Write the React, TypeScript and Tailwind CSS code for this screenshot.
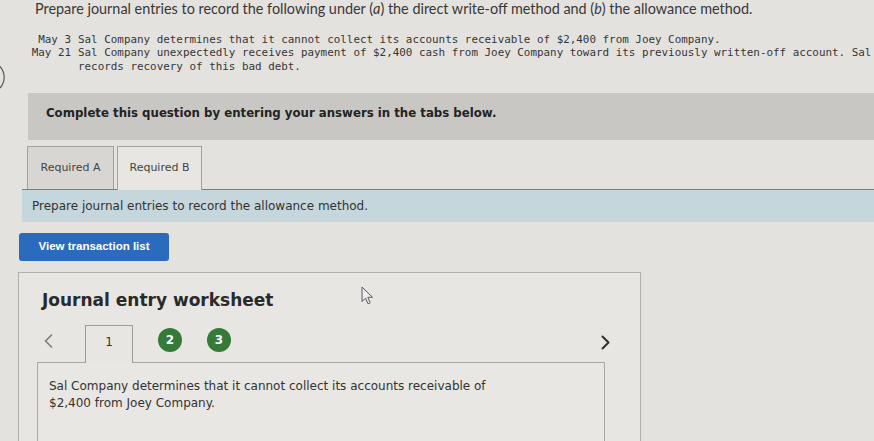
import React from "react";

const sans = "font-['DejaVu_Sans',sans-serif]";

function ChevronL() {
  return (
    <svg width="9" height="14" viewBox="0 0 9 14" fill="none">
      <path d="M7.5 1 L1.5 7 L7.5 13" stroke="#7a7a7a" strokeWidth="1.6" strokeLinecap="round" strokeLinejoin="round" />
    </svg>
  );
}

function ChevronR() {
  return (
    <svg width="9" height="15" viewBox="0 0 9 15" fill="none">
      <path d="M1.5 1.5 L7.5 7.5 L1.5 13.5" stroke="#2f2f2f" strokeWidth="2" strokeLinecap="round" strokeLinejoin="round" />
    </svg>
  );
}

function Cursor() {
  return (
    <svg width="13" height="19" viewBox="0 0 13 19" fill="none">
      <path d="M1 1 L1 15.5 L4.5 12.2 L7 17.8 L9.2 16.8 L6.8 11.3 L11.5 11.3 Z" fill="#ececec" stroke="#5a5a5a" strokeWidth="1" strokeLinejoin="round" />
    </svg>
  );
}

export default function App() {
  return (
    <div className="relative w-[874px] h-[441px] overflow-hidden bg-[#e4e2de] text-[#333]">
      {/* left edge arc */}
      <svg className="absolute left-0 top-[64px]" width="8" height="28" viewBox="0 0 8 28" fill="none">
        <path d="M0 2.5 A16 16 0 0 1 0 24" stroke="#555" strokeWidth="1.2" />
      </svg>

      {/* cursor */}
      <div className="absolute left-[361px] top-[286px]">
        <Cursor />
      </div>

      {/* heading */}
      <div className="h-[18px] pl-[35px] whitespace-nowrap font-['Lato',sans-serif] text-[14.4px] leading-[18px] text-[#383838]">
        Prepare journal entries to record the following under (<i>a</i>) the direct write-off method and (<i>b</i>) the allowance method.
      </div>

      {/* transactions */}
      <div className="mt-[15px] grid grid-cols-[71px_1fr] gap-x-[7px] font-['DejaVu_Sans_Mono',monospace] text-[10.9px] leading-[13.25px] text-[#363636] whitespace-nowrap">
        <div className="text-right">May 3</div>
        <div>Sal Company determines that it cannot collect its accounts receivable of $2,400 from Joey Company.</div>
        <div className="text-right">May 21</div>
        <div>
          Sal Company unexpectedly receives payment of $2,400 cash from Joey Company toward its previously written-off account. Sal
          <br />
          records recovery of this bad debt.
        </div>
      </div>

      {/* banner */}
      <div className={`mt-[20px] ml-[28px] h-[47px] bg-[#c9c7c3] pl-[18px] pt-[12px] ${sans} text-[11.75px] font-bold leading-[16px] text-[#232323]`}>
        Complete this question by entering your answers in the tabs below.
      </div>

      {/* tabs + instruction */}
      <div className={`mt-[6px] ml-[22px] ${sans}`}>
        <div className="flex items-end gap-[3px] pl-[5px]">
          <div className="flex h-[43px] w-[87px] items-center justify-center border border-b-0 border-[#a3a19e] bg-[#d8d6d2] text-[11px] text-[#444]">
            Required A
          </div>
          <div className="relative z-10 -mb-px flex h-[44px] w-[85px] items-center justify-center border border-b-0 border-[#a3a19e] bg-[#e8e6e2] text-[11px] text-[#444]">
            Required B
          </div>
        </div>
        <div className="h-[33px] border-t border-[#7f7d7a] bg-[#c5d6dc] pl-[10px] pt-[8px] text-[12px] leading-[16px] text-[#333]">
          Prepare journal entries to record the allowance method.
        </div>
      </div>

      {/* button */}
      <div className="mt-[11px] ml-[19px] flex h-[28px] w-[150px] items-center justify-center rounded-[3px] bg-[#2b6bbd] font-['Liberation_Sans',sans-serif] text-[11.5px] font-bold text-white">
        View transaction list
      </div>

      {/* worksheet panel */}
      <div className={`mt-[11px] ml-[18px] h-[200px] w-[623px] border border-[#b2b0ad] bg-[#e7e6e2] pt-[17px] ${sans}`}>
        <div className="pl-[23px] text-[17px] font-bold leading-[20px] text-[#2a2a2a]">Journal entry worksheet</div>

        <div className="mt-[15px] ml-[18px] w-[568px]">
          <div className="flex h-[37px] items-start">
            <div className="w-[48px] pl-[7px] pt-[9px]">
              <ChevronL />
            </div>
            <div className="relative z-10 h-[38px] w-[48px] border border-b-0 border-[#9c9a97] bg-[#e7e6e2] pt-[8px] text-center text-[12px] leading-[16px] text-[#333]">
              1
            </div>
            <div className="ml-[25px] mt-[3px] flex h-[24px] w-[24px] items-center justify-center rounded-full bg-[#367a37] text-[12px] font-bold text-white">
              2
            </div>
            <div className="ml-[25px] mt-[3px] flex h-[24px] w-[24px] items-center justify-center rounded-full bg-[#367a37] text-[12px] font-bold text-white">
              3
            </div>
            <div className="ml-auto mr-[-5px] pt-[10px]">
              <ChevronR />
            </div>
          </div>
          <div className="h-[120px] border border-[#a9a7a4] bg-[#e8e7e3] pl-[11px] pt-[15px] text-[12px] leading-[17px] text-[#333]">
            Sal Company determines that it cannot collect its accounts receivable of
            <br />
            $2,400 from Joey Company.
          </div>
        </div>
      </div>
    </div>
  );
}
